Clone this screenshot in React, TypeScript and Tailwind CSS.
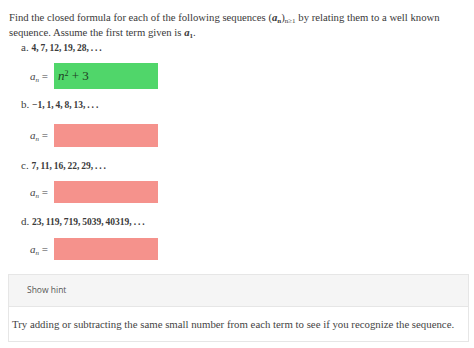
import React from 'react';

const serif = { fontFamily: '"Liberation Serif", "DejaVu Serif", serif' };

function Label({ letter, terms }: { letter: string; terms: string[] }) {
  return (
    <div className="ml-[21px] h-[15px] text-[11px] leading-[15px] text-[#3c3c3c] whitespace-nowrap">
      <span>{letter}. </span>
      <span className="text-[9.5px] font-bold text-[#3a3a3a]">
        {terms.join(',\u2009')},{'\u2009'}.{'\u2009'}.{'\u2009'}.
      </span>
    </div>
  );
}

function Answer({ ok, h, children }: { ok?: boolean; h: string; children?: React.ReactNode }) {
  return (
    <div className="flex items-center ml-[30px]">
      <span className="w-[24px] text-[11px] text-[#444] whitespace-nowrap">
        <i>a</i>
        <sub className="text-[7px] italic">n</sub> =
      </span>
      <div
        className={`w-[104px] ${h} flex items-center pl-[4px] text-[13px] ${
          ok ? 'bg-[#50d66a] text-[#1f3d22]' : 'bg-[#f5928c]'
        }`}
      >
        {children}
      </div>
    </div>
  );
}

export default function App() {
  return (
    <div className="w-[474px] h-[348px] bg-white overflow-hidden text-[#3a3a3a]" style={serif}>
      <p className="ml-[9px] pt-[10px] w-[460px] text-[10.7px] leading-[15px] whitespace-nowrap">
        Find the closed formula for each of the following sequences (
        <b>
          <i>a</i>
          <sub className="text-[7px]">n</sub>
        </b>
        )<sub className="text-[7px]">n≥1</sub> by relating them to a well known
        <br />
        sequence. Assume the first term given is{' '}
        <b>
          <i>a</i>
          <sub className="text-[7px]">1</sub>
        </b>
        .
      </p>

      <Label letter="a" terms={['4', '7', '12', '19', '28']} />
      <div className="mt-[8px]">
        <Answer ok h="h-[26px]">
          <span>
            <i>n</i>
            <sup className="text-[8px]">2</sup> + 3
          </span>
        </Answer>
      </div>

      <div className="mt-[8px]">
        <Label letter="b" terms={['−1', '1', '4', '8', '13']} />
      </div>
      <div className="mt-[12px]">
        <Answer h="h-[23px]" />
      </div>

      <div className="mt-[11px]">
        <Label letter="c" terms={['7', '11', '16', '22', '29']} />
      </div>
      <div className="mt-[8px]">
        <Answer h="h-[22px]" />
      </div>

      <div className="mt-[11px]">
        <Label letter="d" terms={['23', '119', '719', '5039', '40319']} />
      </div>
      <div className="mt-[9px]">
        <Answer h="h-[22px]" />
      </div>

      <div className="mt-[14px] ml-[8px] w-[461px] border border-[#e6e6e6]">
        <div
          className="h-[32px] flex items-center pl-[18px] bg-[#f5f5f5] border-b border-[#e6e6e6] text-[8.5px] text-[#555]"
          style={{ fontFamily: '"Open Sans", "Noto Sans", sans-serif' }}
        >
          Show hint
        </div>
        <div className="h-[34px] flex items-center pl-[3px] text-[10.8px] text-[#444] whitespace-nowrap">
          Try adding or subtracting the same small number from each term to see if you recognize the sequence.
        </div>
      </div>
    </div>
  );
}
